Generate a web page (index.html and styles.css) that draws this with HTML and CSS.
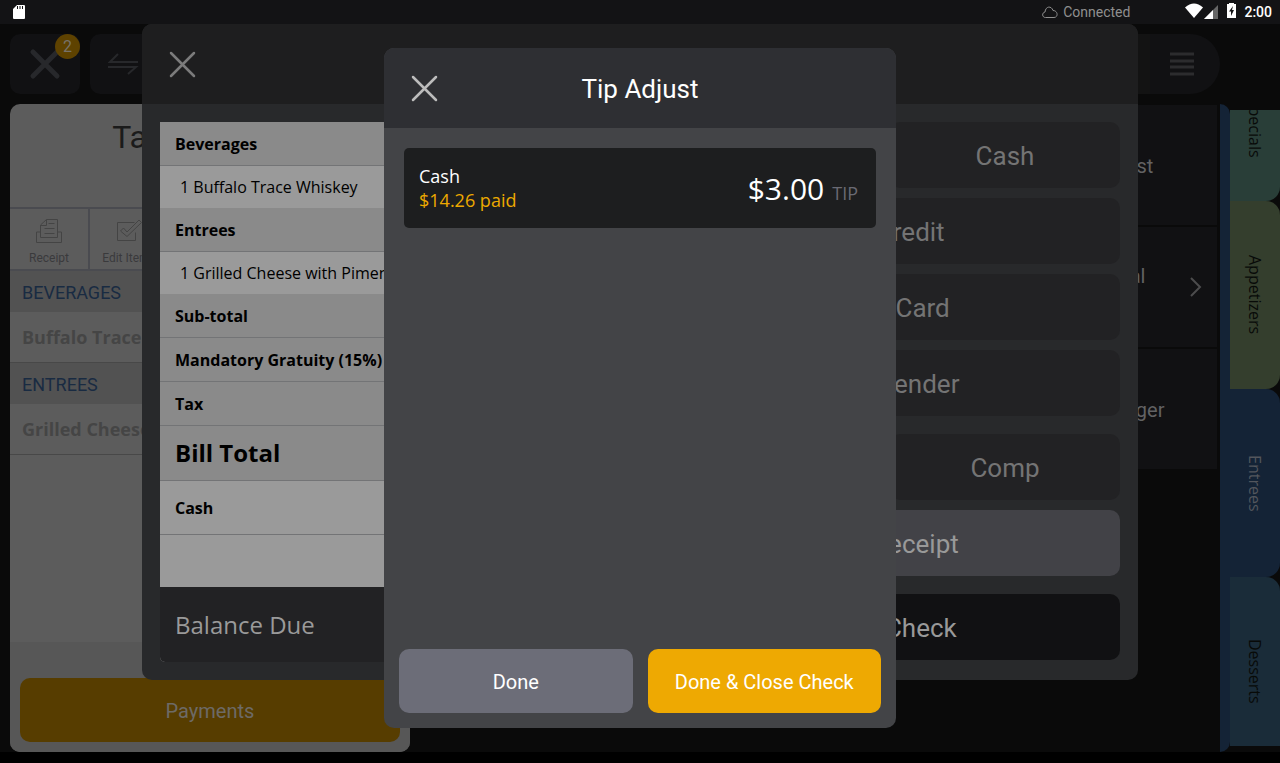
FILE: index.html
```html
<!DOCTYPE html>
<html lang="en">
<head>
    <meta charset="utf-8">
    <title>Tip Adjust</title>
    <link rel="stylesheet" href="styles.css">
</head>
<body>
    <header class="status">
        <svg class="sd" width="12" height="14" viewBox="0 0 12 14"><path fill="#fff" d="M4 0h7q1 0 1 1v12q0 1-1 1H1q-1 0-1-1V4z"/><path stroke="#131315" d="M4.500 1v3M7 1v3M9.500 1v3"/></svg>
        <span class="connected">
            <svg width="16" height="12" viewBox="0 0 16 12" fill="none" stroke="#8f8f8f"><path d="M3.500 11.500C-.2 11.500-.2 6.500 3 6 3.500 0 9.500 -.5 11 4.500c5 0 5.500 7 1 7z"/></svg>
            Connected
        </span>
        <svg class="signals" width="52" height="16" viewBox="0 0 52 16">
            <path fill="#fff" d="M0 4.500Q9-3.500 18 4.500L9 15z"/>
            <path fill="#666" d="M33 2v14H19z"/><path fill="#fff" d="M28 7v9H19z"/>
            <path fill="#fff" d="M42 1h2V0h5v1h2v14h-9V1z"/><path fill="#131315" d="M48 3l-4 5.500h2V13l3-6h-2z"/>
        </svg>
        <span class="clock">2:00</span>
    </header>

    <div class="app">
        <div class="topbar">
            <button class="tool" aria-label="Cancel">
                <svg width="32" height="32" viewBox="0 0 32 32" fill="none" stroke="#27282b" stroke-width="5" stroke-linecap="round"><path d="M4 4l24 24M28 4L4 28"/></svg>
                <span class="badge">2</span>
            </button>
            <button class="tool" aria-label="Transfer">
                <svg width="34" height="24" viewBox="0 0 34 24" fill="none" stroke="#27282b" stroke-width="2"><path d="M30 10H2l8-8M0 15h28l-8 7"/></svg>
            </button>
            <div class="search"></div>
            <button class="list" aria-label="List">
                <svg width="24" height="24" viewBox="0 0 24 24" stroke="#2c2c2e" stroke-width="3"><path d="M0 2h24M0 9h24M0 15h24M0 22h24"/></svg>
            </button>
        </div>

        <div class="work">
            <section class="check">
                <h1>Table 102 Bar</h1>
                <div class="actions">
                    <button>
                        <svg width="28" height="26" viewBox="0 0 28 26" fill="none" stroke="#444"><path d="M5.500 14H1.500v10.500h25V14h-4M5.500 19.500V7l6-5.500h11v18zM5.500 7.500h6v-6M13.500 5.500h6M9.500 10.500h10M9.500 15.500h10"/></svg>
                        Receipt
                    </button>
                    <button>
                        <svg width="28" height="26" viewBox="0 0 28 26" fill="none" stroke="#444"><path d="M19.500 4.500h-17v18h18v-8M5.500 13l3-3 3.500 4 12-12 2.500 2.500L12 18.500z"/></svg>
                        Edit Items
                    </button>
                    <button></button>
                    <button></button>
                    <button></button>
                </div>
                <h2>BEVERAGES</h2>
                <p class="item">Buffalo Trace Whiskey</p>
                <h2>ENTREES</h2>
                <p class="item">Grilled Cheese with Pimento</p>
                <div class="check-foot">
                    <button>Payments</button>
                </div>
            </section>

            <section class="menu">
                <button></button><button></button><button></button>
                <button>Fr Toast</button>
                <button></button><button></button><button></button>
                <button>Cereal<br>Kids
                    <svg class="chevron" width="12" height="20" viewBox="0 0 12 20" fill="none" stroke="#4c4c4d" stroke-width="2"><path d="M1 1l9 9-9 9"/></svg>
                </button>
                <button></button><button></button><button></button>
                <button>Fishburger</button>
            </section>

            <div class="strip"></div>
            <nav class="tabs">
                <button class="specials">Daily Specials</button>
                <button class="appetizers">Appetizers</button>
                <button class="entrees">Entrees</button>
                <button class="desserts">Desserts</button>
            </nav>
        </div>

        <!-- Payments -->
        <div class="layer layer-top">
            <section class="payments">
                <header class="bar">
                    <button class="close" aria-label="Close payments">
                        <svg width="28" height="28" viewBox="0 0 28 28" fill="none" stroke="#7b7b7b" stroke-width="2.500" stroke-linecap="round"><path d="M3 3l23 23M26 3L3 26"/></svg>
                    </button>
                </header>
                <div class="pay-body">
                    <div class="bill">
                        <table>
                            <tr class="group"><th>Beverages</th></tr>
                            <tr class="line"><td>1 Buffalo Trace Whiskey</td></tr>
                            <tr class="group"><th>Entrees</th></tr>
                            <tr class="line"><td>1 Grilled Cheese with Pimento</td></tr>
                            <tr class="group"><th>Sub-total</th></tr>
                            <tr class="group"><th>Mandatory Gratuity (15%)</th></tr>
                            <tr class="group"><th>Tax</th></tr>
                            <tr class="group total"><th>Bill Total</th></tr>
                            <tr class="paid"><th>Cash</th></tr>
                        </table>
                        <div class="balance">Balance Due</div>
                    </div>
                    <div class="tenders">
                        <button></button>
                        <button>Cash</button>
                        <button class="wide">Use Credit</button>
                        <button class="wide">Credit Card</button>
                        <button class="wide">Other Tender</button>
                        <button class="gap"></button>
                        <button class="gap">Comp</button>
                        <button class="wide receipt">Print Receipt</button>
                        <button class="wide gap finish">Close Check</button>
                    </div>
                </div>
            </section>
        </div>

        <!-- Tip Adjust -->
        <div class="layer">
            <section class="tip" role="dialog" aria-labelledby="tip-title">
                <header class="bar">
                    <button class="close" aria-label="Close">
                        <svg width="28" height="28" viewBox="0 0 28 28" fill="none" stroke="#bcbcbc" stroke-width="2.500" stroke-linecap="round"><path d="M3 3l23 23M26 3L3 26"/></svg>
                    </button>
                    <h2 id="tip-title">Tip Adjust</h2>
                </header>
                <div class="tip-body">
                    <button class="payment">
                        <span class="method">Cash<br><span class="amount">$14.26 paid</span></span>
                        <span class="value">$3.00</span>
                        <span class="unit">TIP</span>
                    </button>
                </div>
                <footer>
                    <button>Done</button>
                    <button class="primary">Done &amp; Close Check</button>
                </footer>
            </section>
        </div>
    </div>
</body>
</html>
```
FILE: styles.css
```css
* {
    box-sizing: border-box;
}
html, body, h1, h2, p {
    margin: 0;
    padding: 0;
    font-weight: normal;
}
body {
    display: flex;
    flex-direction: column;
    height: 100vh;
    padding-bottom: 11px;
    overflow: hidden;
    background: #000;
    font-family: Roboto, sans-serif;
}
button {
    margin: 0;
    padding: 0;
    border: 0;
    background: none;
    color: inherit;
    font: inherit;
    cursor: pointer;
}
svg {
    display: block;
}

/* status bar */
.status {
    display: flex;
    align-items: center;
    height: 24px;
    padding: 0 8px 0 13px;
    background: #131315;
    font-size: 14px;
}
.connected {
    display: flex;
    align-items: center;
    gap: 5px;
    margin-left: auto;
    color: #8f8f8f;
}
.signals {
    margin: 0 7px 2px 55px;
}
.clock {
    color: #fff;
    font-weight: 500;
}

.app {
    position: relative;
    display: flex;
    flex-direction: column;
    flex: 1;
    min-height: 0;
    background: #0a0a0a;
}
.topbar {
    display: flex;
    gap: 10px;
    padding: 10px 60px 10px 10px;
}
.tool {
    position: relative;
    display: grid;
    place-items: center;
    width: 70px;
    height: 60px;
    border-radius: 10px;
    background: #111113;
}
.badge {
    position: absolute;
    top: 0;
    right: 0;
    width: 25px;
    border-radius: 50%;
    background: #5e4200;
    color: #77726a;
    font-size: 16px;
    line-height: 25px;
}
.search {
    flex: 1;
    background: #131313;
}
.list {
    display: grid;
    place-items: center;
    width: 70px;
    margin-left: -10px;
    padding-right: 6px;
    border-radius: 0 30px 30px 0;
    background: #111113;
}
.work {
    display: flex;
    flex: 1;
    min-height: 0;
    padding-left: 10px;
}

/* open check */
.check {
    display: flex;
    flex-direction: column;
    width: 400px;
    border-radius: 10px;
    background: #5c5c5c;
    overflow: hidden;
}
.check h1 {
    height: 103px;
    padding-top: 14px;
    color: #1b1b1b;
    font-size: 32px;
    line-height: 38px;
    text-align: center;
}
.actions {
    display: grid;
    grid-template-columns: repeat(5, 1fr);
    height: 64px;
    border-top: 2px solid #4a4b50;
    border-bottom: 2px solid #4a4b50;
}
.actions button {
    display: flex;
    flex-direction: column;
    align-items: center;
    gap: 7px;
    padding-top: 9px;
    border-right: 2px solid #4a4b50;
    color: #3a3a3c;
    font-size: 12px;
}
.check h2 {
    height: 41px;
    padding: 2px 0 0 12px;
    background: #525252;
    color: #192b42;
    font-size: 18px;
    line-height: 39px;
}
.item {
    padding-left: 12px;
    border-bottom: 1px solid #484848;
    color: #454545;
    font: bold 18px/50px "Open Sans", sans-serif;
    white-space: nowrap;
}
.check-foot {
    margin-top: auto;
    padding: 36px 10px 10px;
    background: #575757;
}
.check-foot button {
    width: 100%;
    height: 64px;
    padding-top: 2px;
    border-radius: 10px;
    background: #573d00;
    color: #6d6a66;
    font-size: 20px;
}

/* menu items */
.menu {
    display: grid;
    grid-template-columns: repeat(4, 1fr);
    grid-auto-rows: 120px;
    align-content: start;
    gap: 2px;
    flex: 1;
    padding: 1px 3px 0 2px;
}
.menu button {
    position: relative;
    padding-top: 2px;
    background: #111113;
    color: #626263;
    font-size: 20px;
}
.chevron {
    position: absolute;
    top: 50px;
    right: 15px;
}
.strip {
    width: 10px;
    border-radius: 0 10px 10px 0;
    background: #142336;
}
.tabs {
    display: flex;
    flex-direction: column;
    width: 50px;
    margin: 6px 0;
    overflow: hidden;
}
.tabs button {
    flex: 0 0 188px;
    border-radius: 0 14px 14px 0;
    color: #080a08;
    font-family: "Open Sans", sans-serif;
    font-size: 16px;
    writing-mode: vertical-rl;
}
/* the list is scrolled part way */
.tabs .specials {
    margin-top: -97px;
    background: #293e38;
}
.tabs .appetizers {
    background: #343e2d;
}
.tabs .entrees {
    background: #142336;
    color: #53565d;
}
.tabs .desserts {
    background: #1a2c39;
}

/* dialogs */
.layer {
    position: absolute;
    inset: 0;
    display: flex;
    align-items: center;
    justify-content: center;
}
.layer-top {
    align-items: flex-start;
}
.bar {
    display: grid;
    grid-template-columns: 1fr auto 1fr;
    align-items: center;
    height: 80px;
    padding: 0 26px;
}
.close {
    width: 28px;
    height: 28px;
}
.payments {
    width: 90%;
    max-width: 996px;
    border-radius: 10px;
    background: #28292b;
    overflow: hidden;
}
.payments .bar {
    background: #1e1e1f;
}
.pay-body {
    display: grid;
    grid-template-columns: 1fr 1fr;
    gap: 20px;
    padding: 18px;
}
.bill {
    display: flex;
    flex-direction: column;
    border-radius: 0 0 5px 5px;
    background: #9a9a9a;
    font-family: "Open Sans", sans-serif;
    overflow: hidden;
}
.bill table {
    border-spacing: 0;
    color: #000;
    font-size: 16px;
    line-height: 24px;
    text-align: left;
}
.bill th, .bill td {
    height: 44px;
    padding: 0 15px;
}
.bill .line td {
    height: 42px;
    padding-left: 20px;
}
.group {
    background: #8a8a8a;
}
.group th, .paid th {
    border-bottom: 1px solid #737476;
}
.bill .total th {
    height: 55px;
    font-size: 24px;
}
.bill .paid th {
    height: 54px;
}
.balance {
    margin-top: auto;
    padding-left: 15px;
    background: #222224;
    color: #9a9a9a;
    font-size: 24px;
    line-height: 75px;
}
.tenders {
    display: grid;
    grid-template-columns: 1fr 1fr;
    grid-auto-rows: auto;
    gap: 10px;
    padding-bottom: 2px;
}
.tenders button {
    height: 66px;
    padding-top: 2px;
    border-radius: 10px;
    background: #222224;
    color: #747474;
    font-size: 26px;
}
.tenders .wide {
    grid-column: span 2;
}
.tenders .gap {
    margin-top: 8px;
}
.tenders .receipt {
    background: #424247;
    color: #999;
}
.tenders .finish {
    background: #111113;
    color: #999;
}

.tip {
    display: flex;
    flex-direction: column;
    width: 40%;
    min-width: 480px;
    height: calc(100% - 48px);
    border-radius: 10px;
    background: #434447;
    color: #fff;
    overflow: hidden;
}
.tip .bar {
    background: #2e2f33;
}
.tip h2 {
    padding-top: 2px;
    font-size: 26px;
}
.tip-body {
    flex: 1;
    padding: 20px;
}
.payment {
    display: flex;
    align-items: center;
    width: 100%;
    height: 80px;
    padding: 0 18px 0 15px;
    border-radius: 5px;
    background: #1d1e1f;
    font-family: "Open Sans", sans-serif;
    font-size: 18px;
    line-height: 24px;
    text-align: left;
}
.method {
    flex: 1;
}
.amount {
    color: #eda900;
}
.value {
    margin-right: 8px;
    padding-top: 2px;
    font-size: 30px;
}
.unit {
    padding-top: 10px;
    color: #6a6a73;
}
.tip footer {
    display: grid;
    grid-template-columns: 1fr 1fr;
    gap: 15px;
    padding: 15px;
}
.tip footer button {
    height: 64px;
    padding-top: 2px;
    border-radius: 10px;
    background: #6c6d78;
    font-size: 20px;
}
.tip footer .primary {
    background: #eea902;
}
```
